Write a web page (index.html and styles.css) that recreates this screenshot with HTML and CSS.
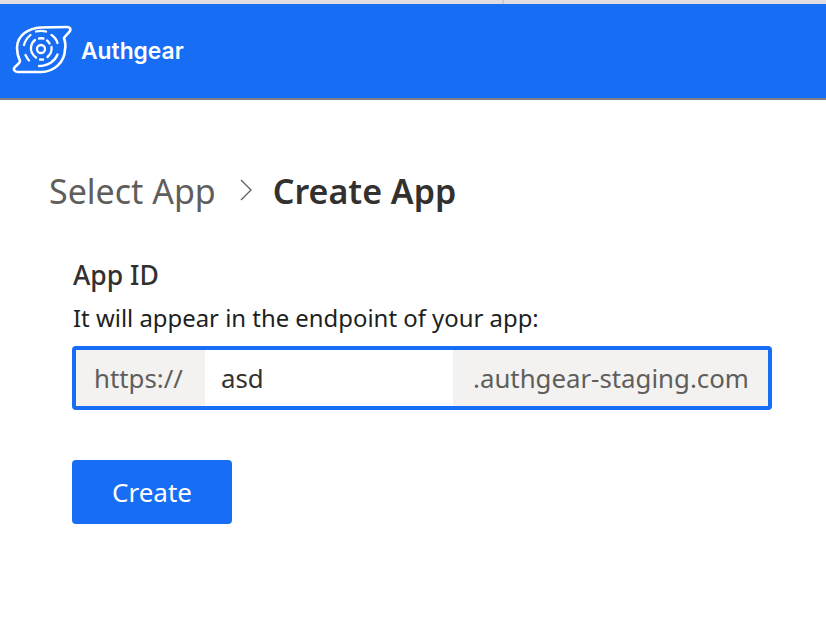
FILE: index.html
```html
<!DOCTYPE html>
<html lang="en">
<head>
<meta charset="utf-8">
<title>Authgear</title>
<link rel="stylesheet" href="styles.css">
</head>
<body>
<div class="chrome"><span class="chrome-tick"></span></div>
<header class="header">
  <svg class="logo" width="60" height="52" viewBox="0 0 60 52" fill="none" stroke="#fff" stroke-linecap="round" stroke-linejoin="round">
    <path stroke-width="2.600" d="M5 24C5 11 17 4 29 3.500L55 3C58 3 59 5 58 7C56 10 53 12 52 14C53 17 54 21 53 25C53 38 42 48 29 48L6 48C2 48 1 45 3 43C5 41 8 39 8 37C6 33 5 29 5 24Z"/>
    <g stroke-width="2.300">
      <circle cx="29" cy="25" r="4"/>
      <path d="M24 33.500C20 30.500 18.500 27 19 23C19.500 19.500 21 17.500 23 16"/>
      <path d="M27 14.500C28.500 14.200 30 14.200 31.500 14.500"/>
      <path d="M35 16.500C36 17.300 37 18.300 37.500 19.500"/>
      <path d="M39.500 23C40 27 38.500 30.500 35.500 33"/>
      <path d="M31 35.500C30 35.600 29 35.600 28 35.500"/>
      <path d="M24 7.500C27 6.800 31 6.800 34 7.500"/>
      <path d="M12 21C13 17 15 14 18.500 11"/>
      <path d="M39.500 11C42.500 13 44.500 15.500 45.500 19"/>
      <path d="M45.500 30.500C43 37 36 42 27 42"/>
      <path d="M13.500 31C14.500 33 15.500 35 17 36.500"/>
    </g>
  </svg>
  <span class="brand">Authgear</span>
</header>
<main class="main">
  <nav class="crumbs">
    <span class="crumb">Select App</span>
    <svg class="chevron" width="12" height="22" viewBox="0 0 12 22" fill="none" stroke="#605e5c" stroke-width="1.300"><path d="M1 1L11 11L1 21"/></svg>
    <span class="crumb crumb-current">Create App</span>
  </nav>
  <form class="form">
    <div class="label">App ID</div>
    <p class="hint">It will appear in the endpoint of your app:</p>
    <div class="field">
      <span class="affix affix-pre">https://</span>
      <span class="value">asd</span>
      <span class="affix affix-post">.authgear-staging.com</span>
    </div>
    <button class="button" type="button">Create</button>
  </form>
</main>
</body>
</html>
```
FILE: styles.css
```css
* { box-sizing: border-box; }
html, body { margin: 0; padding: 0; }
body {
  width: 826px;
  height: 626px;
  overflow: hidden;
  background: #fff;
  color: #323130;
  font-family: "Noto Sans", "Open Sans", sans-serif;
}
.chrome {
  height: 4px;
  background: #e1dcdf;
  display: flex;
}
.chrome-tick {
  width: 2px;
  margin-left: 502px;
  background: #cfcacd;
}
.header {
  height: 96px;
  background: #176ef5;
  border-bottom: 2px solid #808080;
  display: flex;
  align-items: center;
  padding: 0 0 2px 12px;
  gap: 9px;
}
.logo { display: block; }
.brand {
  color: #fff;
  font-family: "Inter", sans-serif;
  font-size: 22.800px;
  font-weight: 600;
}
.main { padding: 69px 0 0 49px; }
.crumbs {
  display: flex;
  align-items: center;
  height: 44px;
  font-size: 34px;
  color: #605e5c;
}
.chevron { margin: -2px 21px 0 24px; }
.crumb-current { color: #323130; font-weight: 600; }
.form { margin: 0; padding: 47px 0 0 23px; display: flex; flex-direction: column; align-items: flex-start; }
.label { font-size: 26.500px; font-weight: 500; line-height: 30px; margin-left: 1px; }
.hint { margin: 14px 0 0 1px; font-size: 23.900px; line-height: 28px; color: #201f1e; }
.field {
  width: 700px;
  height: 64px;
  margin-top: 14px;
  border: 4px solid #176ef5;
  border-radius: 4px;
  display: flex;
  font-size: 25.800px;
}
.affix {
  background: #f3f2f1;
  color: #605e5c;
  display: flex;
  align-items: center;
}
.affix-pre { width: 129px; padding-left: 18px; }
.value { flex: 1; padding-left: 16px; display: flex; align-items: center; }
.affix-post { width: 315px; padding-left: 20px; }
.button {
  width: 160px;
  height: 64px;
  margin-top: 50px;
  border: 0;
  border-radius: 4px;
  background: #176ef5;
  color: #fff;
  font-family: inherit;
  font-size: 26px;
  padding: 0;
}
```
